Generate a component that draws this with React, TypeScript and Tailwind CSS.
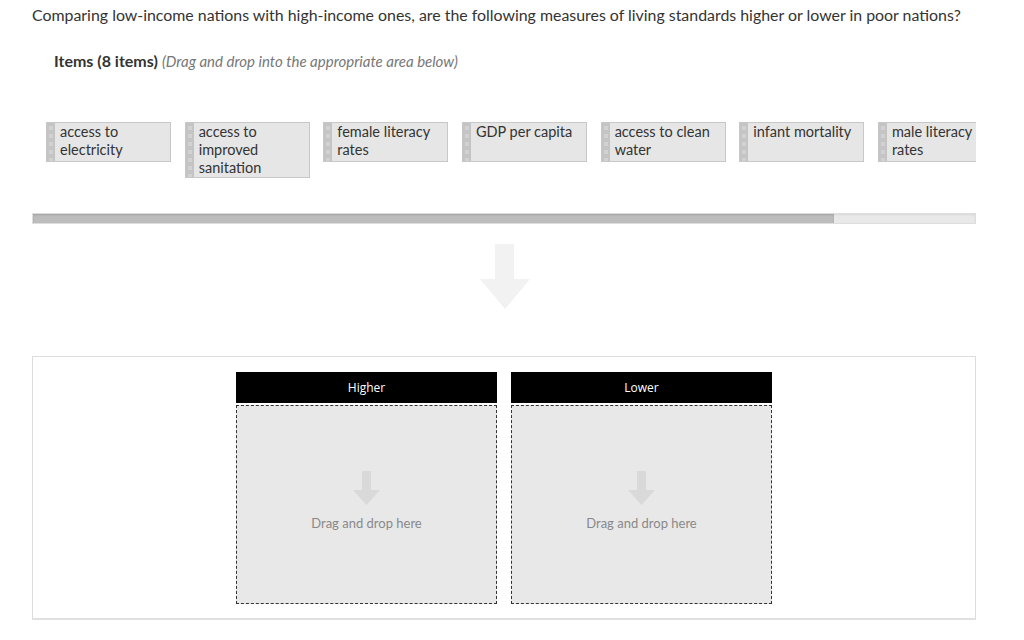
const items = [
  "access to electricity",
  "access to improved sanitation",
  "female literacy rates",
  "GDP per capita",
  "access to clean water",
  "infant mortality",
  "male literacy rates",
];

function Handle() {
  return (
    <div className="relative w-[8px] shrink-0 self-stretch bg-[#c4c4c4] overflow-hidden">
      <div className="absolute inset-x-0 top-[3px] flex flex-col items-center gap-[4px]">
        {Array.from({ length: 8 }).map((_, i) => (
          <span key={i} className="block w-[4px] h-[4px] bg-[#d2d2d2]" />
        ))}
      </div>
    </div>
  );
}

function ItemCard({ text }: { text: string }) {
  return (
    <div className="w-[125px] shrink-0 min-h-[40px] flex bg-[#e6e6e6] border border-[#c8c8c8]">
      <Handle />
      <p className="px-[5px] text-[14.5px] leading-[18px] text-[#333]">{text}</p>
    </div>
  );
}

function BigArrow() {
  return (
    <svg width="50" height="65" viewBox="0 0 50 65">
      <path d="M15 0 H34 V35 H50 L25 65 L0 35 H15 Z" fill="#f2f2f2" />
    </svg>
  );
}

function SmallArrow() {
  return (
    <svg width="27" height="34" viewBox="0 0 27 34">
      <path d="M9 0 H18 V19 H27 L13.5 34 L0 19 H9 Z" fill="#d9d9d9" />
    </svg>
  );
}

function DropZone({ label }: { label: string }) {
  return (
    <div className="w-[261px] flex flex-col gap-[2px]">
      <div className="h-[31px] bg-black flex items-center justify-center text-white text-[12px] font-['Open_Sans',sans-serif]">
        {label}
      </div>
      <div className="h-[199px] bg-[#e8e8e8] border border-dashed border-[#333] flex flex-col items-center pt-[65px]">
        <SmallArrow />
        <p className="mt-[9px] text-[13px] text-[#888]">Drag and drop here</p>
      </div>
    </div>
  );
}

export default function App() {
  return (
    <div className="w-[1024px] h-[640px] bg-white overflow-hidden font-['Lato',sans-serif] text-[#333]">
      <div className="px-[32px] pt-[5px]">
        <p className="text-[15.9px] leading-[20px] text-[#333]">
          Comparing low-income nations with high-income ones, are the following measures of living standards higher or lower in poor nations?
        </p>

        <p className="mt-[26px] ml-[22px] text-[16px] leading-[20px]">
          <span className="font-bold text-[#333]">Items (8 items)</span>{" "}
          <span className="italic text-[15px] text-[#777]">(Drag and drop into the appropriate area below)</span>
        </p>

        <div className="mt-[51px] ml-[14px] w-[930px] flex items-start gap-[13.67px] overflow-hidden">
          {items.map((t) => (
            <ItemCard key={t} text={t} />
          ))}
        </div>

        <div className="mt-[35px] w-[944px] h-[11px] flex bg-[#e9e9e9] border border-[#dedede] shadow-[inset_0_1px_2px_rgba(0,0,0,0.08)]">
          <div className="w-[801px] h-full bg-[#bdbdbd] shadow-[inset_0_1px_2px_rgba(0,0,0,0.15)]" />
        </div>

        <div className="mt-[20px] w-[944px] flex justify-center">
          <div className="ml-[2px]">
            <BigArrow />
          </div>
        </div>

        <div className="mt-[47px] w-[944px] h-[264px] border border-[#dcdcdc] border-b-2 border-b-[#e0e0e0] flex justify-center gap-[14px] pt-[15px]">
          <DropZone label="Higher" />
          <DropZone label="Lower" />
        </div>
      </div>
    </div>
  );
}
